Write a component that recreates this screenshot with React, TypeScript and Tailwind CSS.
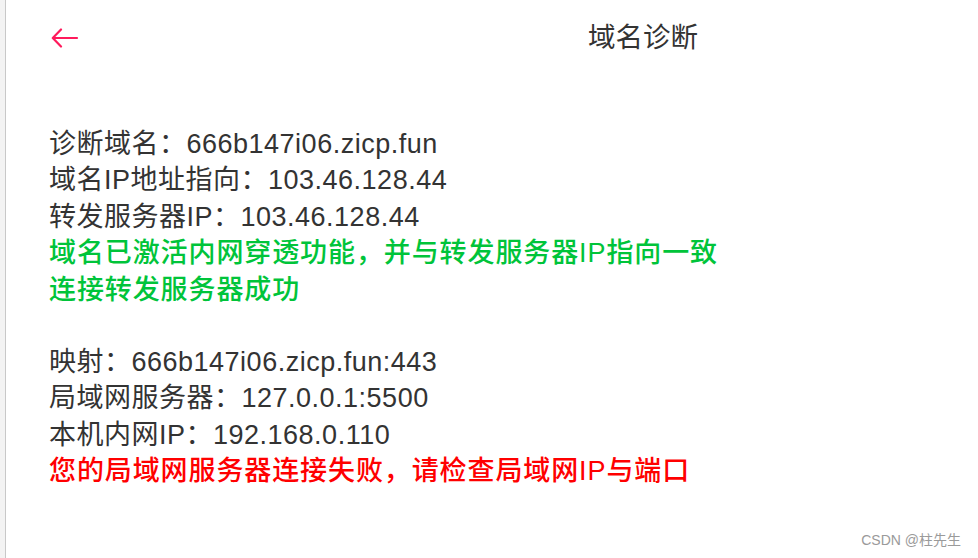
import React from "react";

const font = "font-['Liberation_Sans','Noto_Sans_CJK_SC',sans-serif]";

const lines1 = [
  { text: "诊断域名：666b147i06.zicp.fun", color: "text-[#333333]" },
  { text: "域名IP地址指向：103.46.128.44", color: "text-[#333333]" },
  { text: "转发服务器IP：103.46.128.44", color: "text-[#333333]" },
  { text: "域名已激活内网穿透功能，并与转发服务器IP指向一致", color: "text-[#00c43a] font-medium tracking-[0.9px]" },
  { text: "连接转发服务器成功", color: "text-[#00c43a] font-medium tracking-[0.9px]" },
];

const lines2 = [
  { text: "映射：666b147i06.zicp.fun:443", color: "text-[#333333]" },
  { text: "局域网服务器：127.0.0.1:5500", color: "text-[#333333]" },
  { text: "本机内网IP：192.168.0.110", color: "text-[#333333]" },
  { text: "您的局域网服务器连接失败，请检查局域网IP与端口", color: "text-[#ff0000] font-medium tracking-[0.9px]" },
];

const App: React.FC = () => {
  return (
    <div className={`flex h-[558px] w-[978px] bg-white ${font}`}>
      {/* left strip */}
      <div className="w-[6px] shrink-0 border-r border-[#c8c8c8] bg-[#f3f3f3]" />

      <div className="relative flex flex-1 flex-col">
        {/* header */}
        <div className="flex h-[76px] items-center">
          <div className="ml-[45px] flex h-[30px] w-[30px] items-center">
            <svg width="28" height="20" viewBox="0 0 28 20" fill="none">
              <path d="M26 10H2M10 1.5L1.8 10L10 18.5" stroke="#ff1a5c" strokeWidth="2.2" strokeLinecap="round" strokeLinejoin="round" />
            </svg>
          </div>
          <div className="ml-[507px] text-[27.5px] leading-none text-[#333333]">域名诊断</div>
        </div>

        {/* body */}
        <div className="mt-[50px] ml-[43px] text-[27px] leading-[36.4px] tracking-[0.5px]">
          {lines1.map((l) => (
            <div key={l.text} className={l.color}>{l.text}</div>
          ))}
          <div className="h-[36px]" />
          {lines2.map((l) => (
            <div key={l.text} className={l.color}>{l.text}</div>
          ))}
        </div>

        <div className="absolute bottom-[7px] right-[17px] text-[14px] text-[#9a9a9a]">CSDN @柱先生</div>
      </div>
    </div>
  );
};

export default App;
